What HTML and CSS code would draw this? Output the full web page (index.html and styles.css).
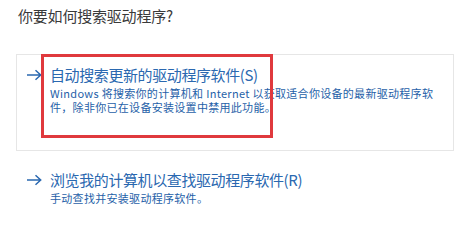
FILE: index.html
```html
<!DOCTYPE html>
<html lang="zh-CN">
<head>
<meta charset="utf-8">
<title>更新驱动程序</title>
<link rel="stylesheet" href="styles.css">
</head>
<body>
<div class="page">
  <h1 class="title">你要如何搜索驱动程序?</h1>
  <div class="option card">
    <svg class="arrow" width="16" height="12" viewBox="0 0 16 12"><path d="M1 6 H14.5 M9.5 1.2 L14.7 6 L9.5 10.8" fill="none" stroke="#2a68b0" stroke-width="1.5"/></svg>
    <div class="text">
      <div class="head">自动搜索更新的驱动程序软件(S)</div>
      <div class="desc">Windows 将搜索你的计算机和 Internet 以获取适合你设备的最新驱动程序软<br>件，除非你已在设备安装设置中禁用此功能。</div>
    </div>
  </div>
  <div class="option">
    <svg class="arrow" width="16" height="12" viewBox="0 0 16 12"><path d="M1 6 H14.5 M9.5 1.2 L14.7 6 L9.5 10.8" fill="none" stroke="#2a68b0" stroke-width="1.5"/></svg>
    <div class="text">
      <div class="head">浏览我的计算机以查找驱动程序软件(R)</div>
      <div class="desc">手动查找并安装驱动程序软件。</div>
    </div>
  </div>
  <div class="highlight"></div>
</div>
</body>
</html>
```
FILE: styles.css
```css
html, body {
  margin: 0;
  padding: 0;
  background: #ffffff;
}
.page {
  position: relative;
  width: 474px;
  height: 241px;
  font-family: "Noto Sans CJK SC", "Noto Sans", sans-serif;
  overflow: hidden;
}
.title {
  margin: 0;
  padding: 6px 0 0 18px;
  font-size: 15px;
  line-height: 20px;
  font-weight: normal;
  color: #3a3a3a;
  height: 28px;
  letter-spacing: -0.2px;
}
.option {
  display: flex;
  align-items: flex-start;
  gap: 8px;
  margin: 0 20px 0 16px;
  padding: 10px 15px 10px 9px;
  border: 1px solid transparent;
}
.card {
  margin-top: 20px;
  border-color: #e6e6e6;
  height: 97px;
  box-sizing: border-box;
  margin-bottom: 8px;
}
.arrow {
  flex: none;
  margin-top: 4px;
}
.text {
  flex: 1;
  min-width: 0;
}
.head {
  font-size: 15px;
  line-height: 20px;
  color: #2a68b0;
  letter-spacing: -0.4px;
}
.desc {
  font-size: 11px;
  line-height: 14px;
  color: #1f5fa8;
  margin-top: 1px;
  letter-spacing: 0.3px;
  white-space: nowrap;
}
.highlight {
  position: absolute;
  left: 41px;
  top: 54px;
  width: 232px;
  height: 84px;
  box-sizing: border-box;
  border: 3px solid #e0393d;
}
```
